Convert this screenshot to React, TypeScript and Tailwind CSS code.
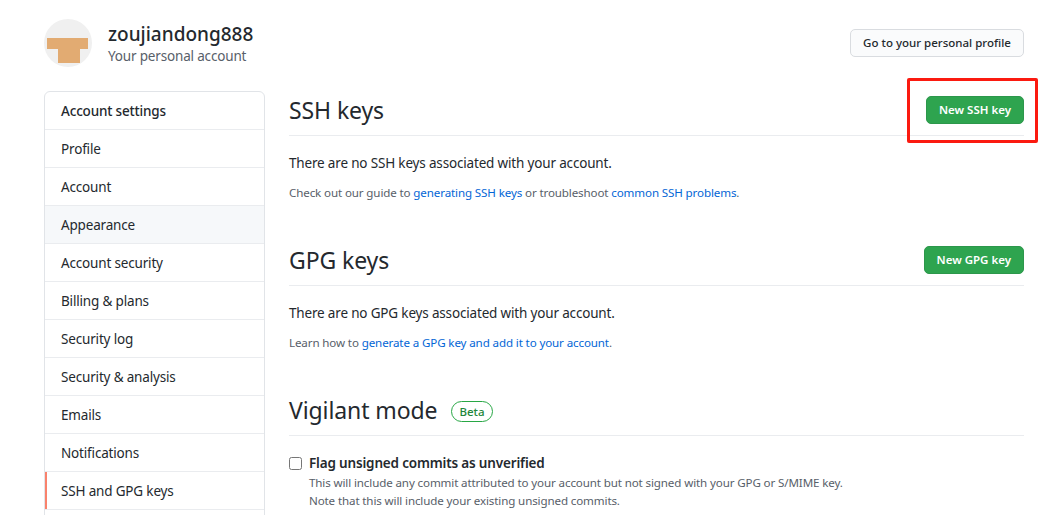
const menu = [
  'Profile',
  'Account',
  'Appearance',
  'Account security',
  'Billing & plans',
  'Security log',
  'Security & analysis',
  'Emails',
  'Notifications',
  'SSH and GPG keys',
];

function Avatar() {
  return (
    <svg width="48" height="48" viewBox="0 0 48 48" className="shrink-0">
      <circle cx="24" cy="24" r="24" fill="#f0f0f0" />
      <path d="M3 19H44V30H36V44H14V30H3z" fill="#e2ab72" />
    </svg>
  );
}

function SectionTitle({ title, children }: { title: string; children?: React.ReactNode }) {
  return (
    <div className="flex items-center justify-between border-b border-[#eaecef] h-[52px]">
      <h2 className="text-[23px] tracking-[-0.1px] leading-[36px] font-normal text-[#24292e]">{title}</h2>
      {children}
    </div>
  );
}

function GreenButton({ label }: { label: string }) {
  return (
    <button className="h-[28px] px-[12px] rounded-[5px] bg-[#2ea44f] border border-[#2c974b] text-white text-[11.5px] font-semibold leading-[26px]">
      {label}
    </button>
  );
}

export default function App() {
  return (
    <div className="relative h-[515px] w-[1058px] overflow-hidden bg-white font-['Noto_Sans',sans-serif] text-[#24292e]">
      <div className="ml-[44px] w-[980px] pt-[19px]">
        {/* Account header */}
        <div className="flex items-center justify-between h-[48px]">
          <div className="flex items-center gap-[16px]">
            <Avatar />
            <div>
              <div className="text-[19px] leading-[26px] font-medium">zoujiandong888</div>
              <div className="text-[13.5px] tracking-[-0.17px] leading-[20px] mt-[-1px] text-[#586069]">Your personal account</div>
            </div>
          </div>
          <button className="h-[28px] w-[174px] rounded-[5px] border border-[#d9dce0] bg-[#fafbfc] text-[11.5px] font-medium text-[#24292e]">
            Go to your personal profile
          </button>
        </div>

        <div className="flex gap-[24px] mt-[24px]">
          {/* Sidebar */}
          <nav className="w-[221px] shrink-0 rounded-t-[6px] border border-[#e1e4e8] pb-[38px] text-[13.5px] tracking-[-0.17px]">
            <div className="h-[38px] px-[16px] pt-[2px] flex items-center font-medium border-b border-[#eaecef]">
              Account settings
            </div>
            {menu.map((item) => (
              <div
                key={item}
                className={`h-[38px] px-[16px] pt-[2px] flex items-center border-b border-[#eaecef] ${
                  item === 'Appearance' ? 'bg-[#f6f8fa]' : ''
                } ${item === 'SSH and GPG keys' ? 'shadow-[inset_2px_0_0_#f9826c]' : ''}`}
              >
                {item}
              </div>
            ))}
          </nav>

          {/* Main */}
          <main className="flex-1 min-w-0">
            <div className="mt-[-7px]">
              <SectionTitle title="SSH keys">
                <GreenButton label="New SSH key" />
              </SectionTitle>
              <p className="text-[13.5px] tracking-[-0.17px] leading-[21px] mt-[17px]">
                There are no SSH keys associated with your account.
              </p>
              <p className="text-[11.6px] tracking-[-0.13px] leading-[18px] mt-[10px] text-[#586069]">
                Check out our guide to <a className="text-[#0366d6]">generating SSH keys</a> or troubleshoot{' '}
                <a className="text-[#0366d6]">common SSH problems</a>.
              </p>
            </div>

            <div className="mt-[32px]">
              <SectionTitle title="GPG keys">
                <GreenButton label="New GPG key" />
              </SectionTitle>
              <p className="text-[13.5px] tracking-[-0.17px] leading-[21px] mt-[17px]">
                There are no GPG keys associated with your account.
              </p>
              <p className="text-[11.6px] tracking-[-0.13px] leading-[18px] mt-[10px] text-[#586069]">
                Learn how to <a className="text-[#0366d6]">generate a GPG key and add it to your account</a>.
              </p>
            </div>

            <div className="mt-[32px]">
              <div className="flex items-center gap-[14px] border-b border-[#eaecef] h-[52px]">
                <h2 className="text-[23px] tracking-[-0.1px] leading-[36px] font-normal">Vigilant mode</h2>
                <span className="h-[21px] mt-[4px] px-[7px] rounded-full border border-[#28a745] text-[#22863a] text-[11.5px] leading-[19px] font-medium">
                  Beta
                </span>
              </div>
              <div className="flex mt-[17px]">
                <input type="checkbox" className="w-[13px] h-[13px] mt-[4px] mr-[7px] appearance-auto" />
                <div>
                  <div className="text-[13.5px] tracking-[-0.17px] leading-[20px] font-semibold">Flag unsigned commits as unverified</div>
                  <div className="text-[11.6px] tracking-[-0.13px] leading-[18px] text-[#586069] mt-[1px]">
                    This will include any commit attributed to your account but not signed with your GPG or S/MIME key.
                    <br />
                    Note that this will include your existing unsigned commits.
                  </div>
                </div>
              </div>
            </div>
          </main>
        </div>
      </div>

      {/* Red annotation box */}
      <div className="absolute left-[907px] top-[78px] w-[131px] h-[65px] rounded-[2px] border-[3px] border-[#fb1a10]" />
    </div>
  );
}
